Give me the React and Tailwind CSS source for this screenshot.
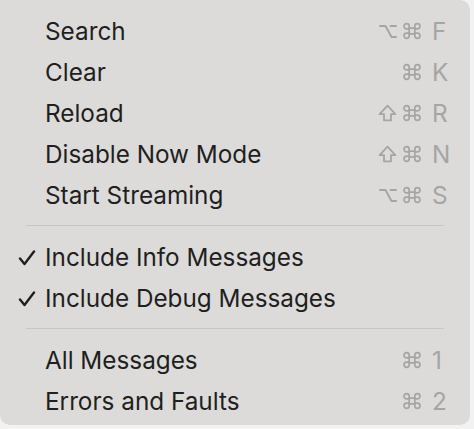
import React from 'react';

const Opt = () => (
  <svg width="18" height="15" viewBox="0 0 18 15" fill="none" stroke="currentColor" strokeWidth="1.9" strokeLinecap="round" strokeLinejoin="round">
    <path d="M1 2h5.5l6 11H17M11.5 2H17" />
  </svg>
);

const Cmd = () => (
  <svg width="18" height="18" viewBox="0 0 16 16" fill="none" stroke="currentColor" strokeWidth="1.5">
    <path d="M5.5 5.5h5v5h-5z" />
    <path d="M5.5 5.5V3.8A2.3 2.3 0 1 0 3.2 6.1h2.3M10.5 5.5V3.8a2.3 2.3 0 1 1 2.3 2.3h-2.3M5.5 10.5v1.7a2.3 2.3 0 1 1-2.3-2.3h2.3M10.5 10.5v1.7a2.3 2.3 0 1 0 2.3-2.3h-2.3" />
  </svg>
);

const Shift = () => (
  <svg width="19" height="18" viewBox="0 0 18 17" fill="none" stroke="currentColor" strokeWidth="1.7" strokeLinejoin="round">
    <path d="M9 1.5L1.5 9.5h4.2v6h6.6v-6h4.2z" />
  </svg>
);

const Check = () => (
  <svg width="18" height="16" viewBox="0 0 18 16" fill="none" stroke="currentColor" strokeWidth="2.4" strokeLinecap="round" strokeLinejoin="round">
    <path d="M2 8.5l4.5 5.5L16 1.5" />
  </svg>
);

const mods = { opt: Opt, cmd: Cmd, shift: Shift };

function Item({ label, keys = [], letter, checked }) {
  return (
    <div className="flex items-center h-[41px] pl-[18px] pr-[20px]">
      <div className="w-[27px] shrink-0 text-[#1f1f1f]">{checked && <Check />}</div>
      <span className="flex-1 text-[#1f1f1f]">{label}</span>
      {letter && (
        <div className="flex items-center text-[#a5a5a5]">
          <div className="flex items-center gap-[6px] pr-[11px]">
            {keys.map((k, i) => {
              const Icon = mods[k];
              return <Icon key={i} />;
            })}
          </div>
          <span className="w-[18px] text-left">{letter}</span>
        </div>
      )}
    </div>
  );
}

function Separator() {
  return <div className="mx-[26px] mt-[9px] mb-[11px] h-px bg-[#c6c6c5]" />;
}

export default function App() {
  return (
    <div className="w-[474px] h-[429px] bg-[#f2f2f2]">
      <div
        className="w-[470px] h-[425px] bg-[#dcdbda] rounded-tr-[10px] rounded-b-[10px] pt-[11px] text-[24.3px] leading-none"
        style={{ fontFamily: 'Inter, "Noto Sans", sans-serif' }}
      >
        <Item label="Search" keys={['opt', 'cmd']} letter="F" />
        <Item label="Clear" keys={['cmd']} letter="K" />
        <Item label="Reload" keys={['shift', 'cmd']} letter="R" />
        <Item label="Disable Now Mode" keys={['shift', 'cmd']} letter="N" />
        <Item label="Start Streaming" keys={['opt', 'cmd']} letter="S" />
        <Separator />
        <Item label="Include Info Messages" checked />
        <Item label="Include Debug Messages" checked />
        <Separator />
        <Item label="All Messages" keys={['cmd']} letter="1" />
        <Item label="Errors and Faults" keys={['cmd']} letter="2" />
      </div>
    </div>
  );
}
